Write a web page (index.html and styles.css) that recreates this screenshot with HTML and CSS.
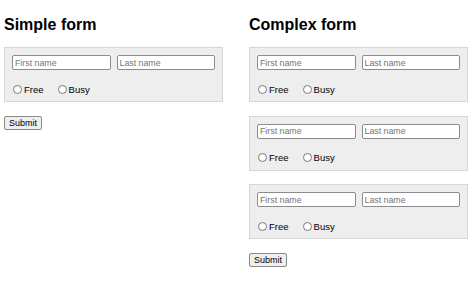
FILE: index.html
```html
<!DOCTYPE html>
<html>
<head>
<meta charset="utf-8">
<link rel="stylesheet" href="styles.css">
</head>
<body>
<div class="page">
  <section class="col">
    <h2 class="title">Simple form</h2>
    <div class="panel">
      <div class="names">
        <input class="field" type="text" placeholder="First name">
        <input class="field" type="text" placeholder="Last name">
      </div>
      <div class="status">
        <label class="opt"><input class="radio" type="radio" name="s1">Free</label>
        <label class="opt"><input class="radio" type="radio" name="s1">Busy</label>
      </div>
    </div>
    <button class="submit" type="button">Submit</button>
  </section>
  <section class="col">
    <h2 class="title">Complex form</h2>
    <div class="panel">
      <div class="names">
        <input class="field" type="text" placeholder="First name">
        <input class="field" type="text" placeholder="Last name">
      </div>
      <div class="status">
        <label class="opt"><input class="radio" type="radio" name="c1">Free</label>
        <label class="opt"><input class="radio" type="radio" name="c1">Busy</label>
      </div>
    </div>
    <div class="panel">
      <div class="names">
        <input class="field" type="text" placeholder="First name">
        <input class="field" type="text" placeholder="Last name">
      </div>
      <div class="status">
        <label class="opt"><input class="radio" type="radio" name="c2">Free</label>
        <label class="opt"><input class="radio" type="radio" name="c2">Busy</label>
      </div>
    </div>
    <div class="panel">
      <div class="names">
        <input class="field" type="text" placeholder="First name">
        <input class="field" type="text" placeholder="Last name">
      </div>
      <div class="status">
        <label class="opt"><input class="radio" type="radio" name="c3">Free</label>
        <label class="opt"><input class="radio" type="radio" name="c3">Busy</label>
      </div>
    </div>
    <button class="submit" type="button">Submit</button>
  </section>
</div>
</body>
</html>
```

FILE: styles.css
```css
html, body {
  margin: 0;
  padding: 0;
  background: #ffffff;
}

body {
  font-family: "Liberation Sans", Arial, sans-serif;
  color: #000000;
}

.page {
  display: grid;
  grid-template-columns: 219px 219px;
  column-gap: 26px;
  padding: 16px 0 0 4px;
  align-items: start;
}

.col {
  display: flex;
  flex-direction: column;
  align-items: flex-start;
}

.title {
  margin: 0;
  font-size: 16px;
  line-height: 18px;
  font-weight: bold;
}

.panel {
  box-sizing: border-box;
  width: 219px;
  height: 55px;
  margin-top: 13px;
  padding: 7px 7px 5px 7px;
  background: #eeeeee;
  border: 1px solid #d6d6d6;
  display: flex;
  flex-direction: column;
}

.panel + .panel {
  margin-top: 13.5px;
}

.names {
  display: flex;
  gap: 6px;
}

.field {
  box-sizing: border-box;
  flex: 1 1 0;
  min-width: 0;
  height: 15px;
  margin: 0;
  padding: 0 2px;
  border: 1px solid #8c8c8c;
  border-radius: 2px;
  background: #ffffff;
  font-family: "Liberation Sans", Arial, sans-serif;
  font-size: 8.8px;
  line-height: 13px;
  color: #000;
}

.field::placeholder {
  color: #757575;
}

.status {
  display: flex;
  align-items: center;
  margin-top: 12px;
  height: 14px;
}

.opt {
  display: flex;
  align-items: center;
  font-size: 9.5px;
  margin-right: 13px;
}

.radio {
  width: 9px;
  height: 9px;
  margin: 0 2px 0 1px;
}

.submit {
  box-sizing: border-box;
  margin-top: 13.5px;
  width: 38px;
  height: 14px;
  padding: 0;
  font-family: "Liberation Sans", Arial, sans-serif;
  font-size: 9px;
  line-height: 12px;
  color: #000;
  background: #efefef;
  border: 1px solid #8a8a8a;
  border-radius: 2px;
}
```
